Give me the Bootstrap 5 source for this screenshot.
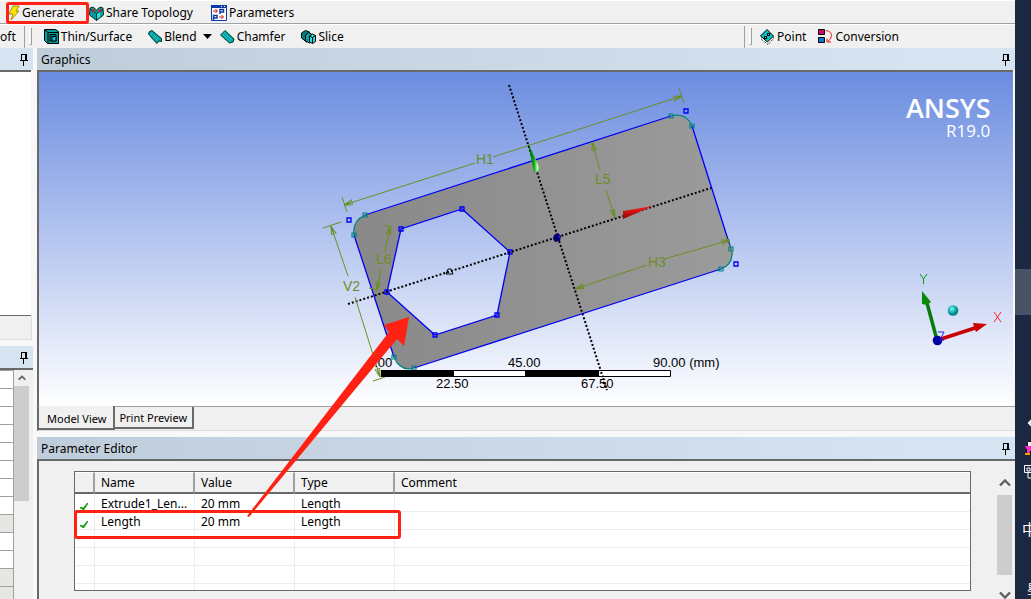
<!DOCTYPE html>
<html lang="en">
<head>
<meta charset="utf-8">
<meta name="viewport" content="width=device-width, initial-scale=1">
<title>DesignModeler</title>
<link href="https://cdn.jsdelivr.net/npm/bootstrap@5.3.0/dist/css/bootstrap.min.css" rel="stylesheet">
<style>
:root{--face:#f0f0f0;--edge:#696969;--shade:#a0a0a0;--mark-red:#ff2113}
body{font-family:"Noto Sans","Open Sans",sans-serif;font-size:12px;line-height:18px;color:#000;background:#f8f8f8}
button{font:inherit;color:inherit;background:none;border:0;padding:0}
svg{display:block;flex:none}
.tool{display:flex;align-items:center;gap:2px;white-space:nowrap}
.bar{height:24px;background:var(--face)}
.bar-top{border-top:1px solid #fff;border-bottom:1px solid var(--shade);padding-top:2px;gap:2px}
.bar-low{border-top:1px solid #fff}
.generate{position:relative;width:81px;margin-left:6px;padding-left:3px}
.generate::after{content:"";position:absolute;inset:-2px -2px -2px 0;border:3px solid var(--mark-red);border-radius:3px}
.rule{width:1px;height:22px;background:var(--shade)}
.grip{width:3px;height:17px;border-right:1px solid var(--shade);border-bottom:1px solid var(--shade);border-left:1px solid #fff}
.bar-end{width:116px}
.left-col{width:33px;flex:none}
.title{height:22px;background:linear-gradient(90deg,#bfcddb,#d6e3f0 90%);padding:2px 5px 0 4px}
.left-col .title{background:#d6e3f0}
.dock-gap{height:6px}
.tree{border-top:2px solid var(--edge);border-bottom:1px solid var(--edge);background:#fff;margin-right:2px;min-height:100px}
.foot{height:24px;background:var(--face);margin-right:1px;border-right:1px solid #ddd;border-bottom:1px solid #ddd}
.details{border-top:2px solid var(--edge);flex:0 0 231px;background:var(--face);overflow:hidden}
.details-rows{width:14px;border-right:1px solid var(--shade)}
.details-rows div{height:18px;background:#fff;border-top:1px solid var(--shade)}
.details-rows .group{background:#e6e6e2}
.thumb{background:#cdcdcd;width:15px}
.view{border-left:2px solid var(--edge);border-top:2px solid var(--edge);margin-right:2px;min-height:240px;background:linear-gradient(#6b8ce0,#fff);overflow:hidden}
.view svg{width:100%;height:100%}
.tabs{height:25px;background:var(--face);border-left:2px solid var(--edge);border-top:1px solid var(--shade);border-bottom:1px solid #ddd;font-size:11px}
.tab{height:22px;padding:2px 5px 0 4px;border-right:2px solid var(--edge);border-bottom:2px solid var(--edge);line-height:18px;background:var(--face)}
.tab-on{height:24px;padding:4px 7px 0 8px;margin-top:-1px}
.editor{border-left:2px solid var(--edge);border-top:2px solid var(--edge);background:var(--face);padding:10px 3px 0 35px}
.grid-box{border:1px solid var(--edge);background:#fff}
.params{width:100%;table-layout:fixed;border-collapse:separate;border-spacing:0}
.params th{height:22px;font-weight:400;padding:0 6px;background:var(--face);border-right:2px solid var(--shade);border-bottom:2px solid var(--edge);border-top:1px solid #fff;line-height:18px}
.params td{height:18px;padding:2px 6px 0;border-right:1px solid #ededed;border-bottom:1px solid #ededed;line-height:15px;white-space:nowrap}
.params tr>:last-child{border-right:0}
.params .tail td{height:6px;border-bottom:0;line-height:0}
.params .tick{padding:8px 0 0 5px}
.editor-scroll{margin-left:26px}
.row-mark{left:0;top:39px;width:327px;height:29px;border:3px solid var(--mark-red);border-radius:3px}
.pointer{left:0;top:0;pointer-events:none}
.tray{width:16px;flex:none;background:#1b2842;color:#fff;overflow:hidden;font-family:"Liberation Sans","Noto Sans CJK SC",sans-serif}
.tray-on{height:46px;background:#485366;margin-top:269px}
.tray-text{white-space:nowrap;padding-left:7px;font-size:15px}
.tray-small{white-space:nowrap;padding-left:12px;font-size:12px}
.brand{font:600 27px "Open Sans",sans-serif;fill:#fff}
.release{font:17px "Open Sans",sans-serif;fill:#fff}
.scale-text{font:13px "Liberation Sans",sans-serif}
.dim-text{font:14px "Liberation Sans",sans-serif;fill:#6b8e23}
</style>
</head>
<body>
<svg width="0" height="0" class="position-absolute" aria-hidden="true">
  <symbol id="pin" viewBox="0 0 8 12"><path d="M1 0h6v1H1zM1 0h1v7H1zM5 0h2v7H5zM0 6h8v1H0zM3 7h1v5H3z"/></symbol>
  <symbol id="up" viewBox="0 0 12 8"><path d="M1 6.500 6 1.500l5 5" fill="none" stroke="#606060" stroke-width="2.400"/></symbol>
  <symbol id="ok" viewBox="0 0 9 8"><path d="M0 4h2l1 1 4-5h1v1L4 7H3L0 5z" fill="#0a9a0a"/></symbol>
  <marker id="arw" viewBox="0 0 9 6" refX="9" refY="3" markerWidth="9" markerHeight="6" orient="auto-start-reverse"><path d="M9 3 0 .5v5zM0 3h9" fill="none" stroke="#6b8e23"/></marker>
</svg>

<div class="d-flex min-vh-100 overflow-hidden">
<main class="d-flex flex-column flex-grow-1 overflow-hidden">
  <div class="bar bar-top d-flex align-items-center">
    <button class="tool generate">
      <svg width="11" height="16" viewBox="0 0 11 16"><path d="M4 1h6L7 6h3L2 15l2-6H0z" fill="#ffe600" stroke="#8a7a00" stroke-width=".8"/></svg>Generate</button>
    <button class="tool">
      <svg width="15" height="15" viewBox="0 0 15 15"><path d="M1 2l3-1 3.500 3L11 1l3 1 .5 7-7 5.500L.5 9z" fill="#00a0a0" stroke="#033"/><path d="M1 3.500l6.500 4 6.500-4M7.500 7.500v7" fill="none" stroke="#033"/><path d="M8 8l3-2v5l-3 2z" fill="#29e0dc"/><path d="M3 3l3 2M12 3L9 5M3 6l3-2M12 6L9 4" fill="none" stroke="#e32020" stroke-width="1.300"/></svg>Share Topology</button>
    <button class="tool ms-3">
      <svg width="16" height="16" viewBox="0 0 16 16"><path d="M.5.500h15v15H.5z" fill="#fff" stroke="#0b3aa8"/><path d="M0 0h16v3H0z" fill="#0b3aa8"/><path d="M10 1h1v1h-1zM13 1h1v1h-1z" fill="#fff"/><path d="M2 6h4M4.500 4 6.500 6l-2 2M8 12h4M10.500 10l2 2-2 2" stroke="#c01818" fill="none"/><path d="M9 9V4.500h3.500v2.500H9M2.500 15v-4.500H6V13H2.500" fill="none" stroke="#0b3aa8" stroke-width="1.500"/></svg>Parameters</button>
  </div>
  <div class="bar bar-low d-flex align-items-center">
    <button class="tool">oft</button><span class="rule ms-2 me-1"></span><span class="grip ms-px me-2"></span>
    <button class="tool ms-px me-3">
      <svg class="ms-1" width="15" height="15" viewBox="0 0 15 15"><path d="M.5.500h11l3 2v12h-11l-3-3z" fill="#00a0a0" stroke="#000"/><path d="M1 1l3 2.500h10M4 3.500V14" fill="none" stroke="#000"/><path d="M6 5.500h6v6.500H6z" fill="#078" stroke="#000"/><path d="M8 7.500h4V12H8z" fill="#00c8c8" stroke="#000"/></svg>Thin/Surface</button>
    <button class="tool me-2">
      <svg width="14" height="14" viewBox="0 0 14 14"><path d="M.5 4Q.5 1 4 .5l9.500 8v3l-3-.5-1.500 2.500-3-3z" fill="#00a0a0" stroke="#033"/><path d="M3 2.500l8 7M2 4l8 7" stroke="#49d8d4" stroke-dasharray="1 1"/></svg>Blend
      <svg class="ms-1" width="9" height="5" viewBox="0 0 9 5"><path d="M0 0h9L4.500 5z"/></svg></button>
    <button class="tool me-3">
      <svg width="15" height="14" viewBox="0 0 15 14"><path d="M.5 5l4.500-4.500 9 8.500-1 3-3.500 1z" fill="#00a8a8" stroke="#033"/><path d="M4 2.500l9 8M2 4l9 8" stroke="#49d8d4" stroke-dasharray="1 1"/></svg>Chamfer</button>
    <button class="tool">
      <svg width="15" height="14" viewBox="0 0 15 14"><path d="M.5 3l4-2.500 4 1.500v8l-3 2-5-4z" fill="#067c7c" stroke="#000"/><path d="M4.500 5l3-2.500 3 1.500v8l-2 1-4-2z" fill="#00a8a8" stroke="#000"/><path d="M8.500 6l3-2 3 1.500v6l-3 2-3-1.500z" fill="#30e0dc" stroke="#000"/><path d="M8.500 6l3 1.500 3-2M11.500 7.500v6" fill="none" stroke="#000"/></svg>Slice</button>
    <span class="flex-grow-1"></span>
    <span class="rule me-1"></span><span class="grip"></span>
    <button class="tool ms-2 me-2">
      <svg class="ms-px" width="15" height="16" viewBox="0 0 15 16"><path d="M7 3.500 14 9l-6 6.500L1 10z" fill="#fff" stroke="#000" stroke-dasharray="1 1"/><path d="M7 .5 13.500 7 7.500 13 .5 7z" fill="#00c4c4" stroke="#000"/><path d="M7 4h3v3H7zM4 7h3v3H4z"/><path d="M8 5h1v1H8zM5 8h1v1H5z" fill="#0cc"/></svg>Point</button>
    <button class="tool ms-1">
      <svg width="15" height="15" viewBox="0 0 15 15"><path d="M.5.500h6v5h-6z" fill="#d6006e" stroke="#000"/><path d="M.5 8.500h6v5h-6z" fill="#0a78d0" stroke="#000"/><path d="M8 1.500q5.500 1 5.500 5t-4 6M9 9.500v3.500h4" fill="none" stroke="#f01818"/></svg>Conversion</button>
    <span class="bar-end"></span>
  </div>

  <div class="d-flex gap-1 flex-grow-1">
    <aside class="left-col d-flex flex-column">
      <div class="title d-flex align-items-center justify-content-end"><svg width="8" height="12"><use href="#pin"/></svg></div>
      <div class="tree flex-grow-1"></div>
      <div class="foot"></div>
      <div class="dock-gap"></div>
      <div class="title d-flex align-items-center justify-content-end"><svg width="8" height="12"><use href="#pin"/></svg></div>
      <div class="details d-flex">
        <div class="details-rows"><div></div><div></div><div></div><div></div><div></div><div></div><div></div><div></div><div class="group"></div><div></div><div></div><div class="group"></div><div class="group"></div></div>
        <div class="d-flex flex-column align-items-center">
          <svg class="my-1" width="8" height="8"><use href="#up"/></svg><div class="thumb h-50"></div>
        </div>
      </div>
    </aside>

    <section class="d-flex flex-column flex-grow-1 position-relative overflow-hidden">
      <div class="title d-flex align-items-center justify-content-between"><span>Graphics</span><svg width="8" height="12"><use href="#pin"/></svg></div>
      <div class="view flex-grow-1 position-relative">
        <svg class="position-absolute" viewBox="39 72 974 334" role="img" aria-label="Plate sketch with hexagonal hole">
          <defs>
            <linearGradient id="plate" x1="0" x2="1"><stop offset="0" stop-color="#898989"/><stop offset="1" stop-color="#9b9b9b"/></linearGradient>
            <linearGradient id="redc" x1="0" x2="0" y1="0" y2="1"><stop offset="0" stop-color="#f22"/><stop offset="1" stop-color="#900000"/></linearGradient>
            <linearGradient id="grnc"><stop offset="0" stop-color="#005a00"/><stop offset=".5" stop-color="#0a0"/><stop offset=".8" stop-color="#cfc"/><stop offset="1" stop-color="#0c0"/></linearGradient>
            <radialGradient id="ball" cx=".4" cy=".35"><stop offset="0" stop-color="#6ff"/><stop offset="1" stop-color="#088"/></radialGradient>
          </defs>
          <path fill="url(#plate)" fill-rule="evenodd" d="M365 215 671 116Q686 112 692 126L731 249Q735 263 721 269L414 368Q400 372 394 357L354 235Q352 221 365 215zM401 229 387 292 435 335 497 315 510 252 462 209z"/>
          <g fill="none" stroke="#0000f5" stroke-width="1.300">
            <path d="M365 215 671 116M692 126 731 249M721 269 414 368M394 357 354 235M401 229 387 292 435 335 497 315 510 252 462 209z"/>
            <path d="M399 227h4v4h-4zM460 207h4v4h-4zM508 250h4v4h-4zM495 313h4v4h-4zM433 333h4v4h-4zM385 290h4v4h-4zM347 218h4v4h-4zM684 109h4v4h-4zM734 262h4v4h-4z"/>
          </g>
          <g fill="none" stroke="#008484" stroke-width="1.200">
            <path d="M671 116Q686 112 692 126M731 249Q735 263 721 269M414 368Q400 372 394 357M354 235Q352 221 365 215"/>
            <path d="M363 213h4v4h-4zM352 233h4v4h-4zM669 114h4v4h-4zM690 124h4v4h-4zM729 247h4v4h-4zM719 267h4v4h-4zM392 355h4v4h-4zM412 366h4v4h-4z"/>
          </g>
          <g fill="none" stroke="#000" stroke-width="2" stroke-dasharray="2 2"><path d="M509 85 607 390M348 304 711 188"/></g>
          <path d="M446 274l2-5h3l2 5z" fill="none" stroke="#000"/>
          <g fill="none" stroke="#6b8e23">
            <path marker-start="url(#arw)" d="M344 205 475 163"/><path marker-end="url(#arw)" d="M493 157 682 96"/>
            <path d="M342 197 347 212M679 88 684 103M323 228 341 222M373 381 385 377M383 225 392 227M369 288 378 290M726 236 733 255"/>
            <path marker-start="url(#arw)" d="M331 226 348 276"/><path marker-end="url(#arw)" d="M355 297 380 377"/>
            <path marker-start="url(#arw)" d="M390 226 385 252"/><path marker-end="url(#arw)" d="M381 269 377 290"/>
            <path marker-start="url(#arw)" d="M592 142 600 170"/><path marker-end="url(#arw)" d="M606 190 615 218"/>
            <path marker-start="url(#arw)" d="M575 289 647 265"/><path marker-end="url(#arw)" d="M664 259 730 240"/>
          </g>
          <g class="dim-text">
            <text x="476" y="164">H1</text><text x="343" y="291">V2</text><text x="376" y="264">L6</text><text x="595" y="184">L5</text><text x="648" y="267">H3</text>
          </g>
          <path d="M528 143 540 169q-3 3-6 3z" fill="url(#grnc)"/>
          <path d="M653 206 623 211v8z" fill="url(#redc)"/>
          <path d="M554 235l4-2 3 3-1 5-5 1-2-3z" fill="#00006e"/><path d="M557 235l3 1v3z" fill="#2020c8"/>
          <g class="scale-text">
            <text x="367" y="367">0.00</text><text x="508" y="367">45.00</text><text x="653" y="367">90.00 (mm)</text><text x="436" y="388">22.50</text><text x="581" y="388">67.50</text>
          </g>
          <path d="M381.500 370.500h289v6h-289z" fill="#fff" stroke="#000"/><path d="M381 370h73v7h-73zM525 370h74v7h-74z"/>
          <path d="M601 372l2 5M603 382l4 8" stroke="#000" stroke-width="2" stroke-dasharray="2 2"/>
          <text class="brand" x="906" y="118">ANSYS</text><text class="release" x="946" y="137">R19.0</text>
          <path d="M937 340 927 303" stroke="#0a7a0a" stroke-width="3.500"/><path d="M922 291l9 11-4 3-5-1z" fill="#0a8a0a"/>
          <path d="M938 340 975 328" stroke="#c80000" stroke-width="3.500"/><path d="M987 324 973 323l1 4 2 5z" fill="#c00"/>
          <circle cx="937.500" cy="340.500" r="4.800" fill="#0000a0"/><path d="M938 332h6l-4 8h4" fill="none" stroke="#22e"/>
          <circle cx="953" cy="310.500" r="5.300" fill="url(#ball)"/>
          <path d="M920 274l3.500 5 3.500-5M923.500 279v5" fill="none" stroke="#0a9a0a"/><path d="M994 312l7 10M1001 312l-7 10" stroke="#f22"/>
        </svg>
      </div>
      <div class="tabs d-flex align-items-start"><button class="tab tab-on">Model View</button><button class="tab">Print Preview</button></div>
      <div class="dock-gap"></div>
      <div class="title d-flex align-items-center justify-content-between"><span>Parameter Editor</span><svg width="8" height="12"><use href="#pin"/></svg></div>
      <div class="editor d-flex">
        <div class="flex-grow-1 position-relative pb-2">
          <div class="grid-box">
          <table class="params">
            <colgroup><col style="width:20px"><col style="width:100px"><col style="width:100px"><col style="width:100px"><col></colgroup>
            <thead><tr><th></th><th>Name</th><th>Value</th><th>Type</th><th>Comment</th></tr></thead>
            <tbody>
              <tr><td class="tick"><svg width="9" height="8"><use href="#ok"/></svg></td><td>Extrude1_Len...</td><td>20 mm</td><td>Length</td><td></td></tr>
              <tr><td class="tick"><svg width="9" height="8"><use href="#ok"/></svg></td><td>Length</td><td>20 mm</td><td>Length</td><td></td></tr>
              <tr><td></td><td></td><td></td><td></td><td></td></tr>
              <tr><td></td><td></td><td></td><td></td><td></td></tr>
              <tr><td></td><td></td><td></td><td></td><td></td></tr>
              <tr class="tail"><td></td><td></td><td></td><td></td><td></td></tr>
            </tbody>
          </table>
          </div>
          <div class="row-mark position-absolute"></div>
        </div>
        <div class="editor-scroll d-flex flex-column align-items-center pt-2">
          <svg width="12" height="8"><use href="#up"/></svg><div class="thumb flex-grow-1 mt-2 mb-3"></div>
          <svg width="12" height="8"><use href="#up" transform="rotate(180 6 4)"/></svg>
        </div>
      </div>
      <svg class="pointer position-absolute" width="400" height="480" viewBox="37 48 400 480" aria-hidden="true"><path d="M247 516 389 332 384 325 409 317 404 346 397 339 249 517z" fill="#ff2113"/></svg>
    </section>
  </div>
</main>
<nav class="tray d-flex flex-column">
  <div class="tray-on"></div>
  <svg class="ms-1" width="12" height="182" viewBox="1019 315 12 182">
    <path d="M1033 419l-4 4 4 4" fill="none" stroke="#fff" stroke-width="2"/>
    <path d="M1026 453q0-13 7-13v15h-7z" fill="#050505"/><path d="M1028 442h5v4h-5z" fill="#eee"/><path d="M1025 446h8v5h-3l-1 3h-2v-4z" fill="#ff2ac8"/><path d="M1025 453h5v2h-5z" fill="#ffa500"/>
    <path d="M1024.500 465.500h8v7h-8zM1027 468h3v3h-3zM1028 473v5h5" fill="none" stroke="#fff"/>
  </svg>
  <div class="tray-text mt-4">中</div>
  <div class="tray-small mt-auto">星期</div>
</nav>
</div>
<script src="https://cdn.jsdelivr.net/npm/bootstrap@5.3.0/dist/js/bootstrap.bundle.min.js"></script>
</body>
</html>
